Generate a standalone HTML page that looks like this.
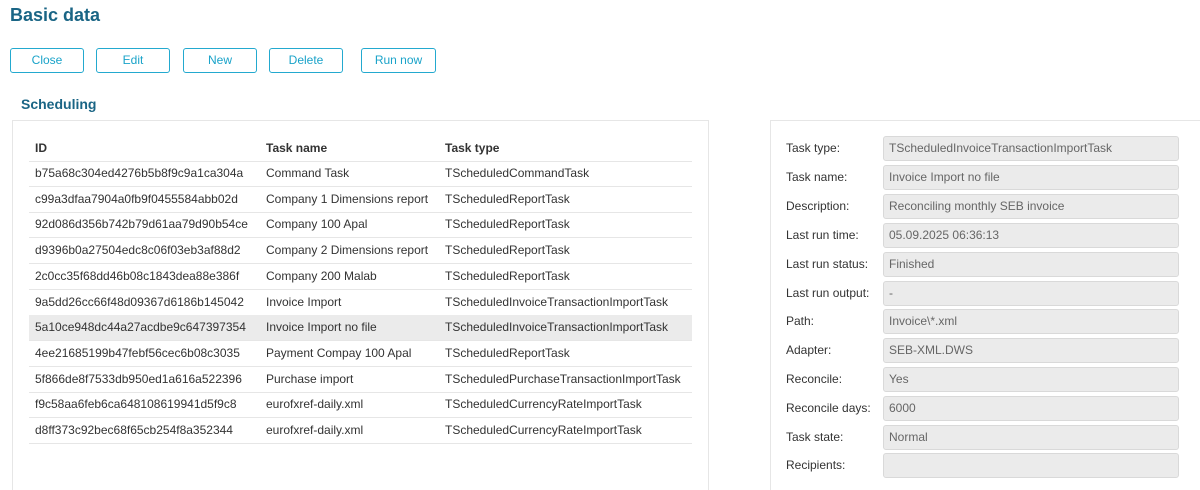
<!DOCTYPE html>
<html><head><meta charset="utf-8"><style>
*{box-sizing:border-box;margin:0;padding:0}
body{width:1200px;height:483px;overflow:hidden;background:#fff;font-family:"Liberation Sans",Arial,sans-serif;color:#333;position:relative}
.a{position:absolute}
h1{position:absolute;left:10px;top:5px;font-size:18px;font-weight:bold;color:#1a6585}
h2{position:absolute;left:21px;top:96px;font-size:14px;font-weight:bold;color:#1a6585}
.btn{position:absolute;top:48px;height:25px;border:1px solid #23a9cf;border-radius:3px;color:#1aa3c9;font-size:12px;text-align:center;line-height:23px;background:#fff}
.panel{position:absolute;top:120px;border:1px solid #e6e6e6;border-bottom:none}
.row{position:absolute;left:29px;width:663px;height:26px;border-bottom:1px solid #e6e6e6;font-size:12px;line-height:25px}
.row span{position:absolute}
.c1{left:6px}.c2{left:237px}.c3{left:416px}
.hd{font-weight:bold;font-size:12px}
.lbl{position:absolute;left:786px;font-size:12px;color:#333}
.inp{position:absolute;left:883px;width:296px;height:25px;background:#ebebeb;border:1px solid #d9d9d9;border-radius:3px;font-size:12px;color:#666;padding-left:5px;line-height:23px}
</style></head><body>
<h1>Basic data</h1>
<div class="btn" style="left:10px;width:74px">Close</div>
<div class="btn" style="left:96px;width:74px">Edit</div>
<div class="btn" style="left:183px;width:74px">New</div>
<div class="btn" style="left:269px;width:74px">Delete</div>
<div class="btn" style="left:361px;width:75px">Run now</div>
<h2>Scheduling</h2>
<div class="panel" style="left:12px;width:697px;height:370px"></div>
<div class="panel" style="left:770px;width:440px;height:370px"></div>

<div class="row hd" style="top:136px"><span class="c1">ID</span><span class="c2">Task name</span><span class="c3">Task type</span></div>
<div class="row" style="top:161px"><span class="c1">b75a68c304ed4276b5b8f9c9a1ca304a</span><span class="c2">Command Task</span><span class="c3">TScheduledCommandTask</span></div>
<div class="row" style="top:186.7px"><span class="c1">c99a3dfaa7904a0fb9f0455584abb02d</span><span class="c2">Company 1 Dimensions report</span><span class="c3">TScheduledReportTask</span></div>
<div class="row" style="top:212.4px"><span class="c1">92d086d356b742b79d61aa79d90b54ce</span><span class="c2">Company 100 Apal</span><span class="c3">TScheduledReportTask</span></div>
<div class="row" style="top:238.1px"><span class="c1">d9396b0a27504edc8c06f03eb3af88d2</span><span class="c2">Company 2 Dimensions report</span><span class="c3">TScheduledReportTask</span></div>
<div class="row" style="top:263.8px"><span class="c1">2c0cc35f68dd46b08c1843dea88e386f</span><span class="c2">Company 200 Malab</span><span class="c3">TScheduledReportTask</span></div>
<div class="row" style="top:289.5px"><span class="c1">9a5dd26cc66f48d09367d6186b145042</span><span class="c2">Invoice Import</span><span class="c3">TScheduledInvoiceTransactionImportTask</span></div>
<div class="row" style="top:315.2px;background:#ebebeb"><span class="c1">5a10ce948dc44a27acdbe9c647397354</span><span class="c2">Invoice Import no file</span><span class="c3">TScheduledInvoiceTransactionImportTask</span></div>
<div class="row" style="top:340.9px"><span class="c1">4ee21685199b47febf56cec6b08c3035</span><span class="c2">Payment Compay 100 Apal</span><span class="c3">TScheduledReportTask</span></div>
<div class="row" style="top:366.6px"><span class="c1">5f866de8f7533db950ed1a616a522396</span><span class="c2">Purchase import</span><span class="c3">TScheduledPurchaseTransactionImportTask</span></div>
<div class="row" style="top:392.3px"><span class="c1">f9c58aa6feb6ca648108619941d5f9c8</span><span class="c2">eurofxref-daily.xml</span><span class="c3">TScheduledCurrencyRateImportTask</span></div>
<div class="row" style="top:418px"><span class="c1">d8ff373c92bec68f65cb254f8a352344</span><span class="c2">eurofxref-daily.xml</span><span class="c3">TScheduledCurrencyRateImportTask</span></div>

<div class="lbl" style="top:141px">Task type:</div><div class="inp" style="top:136px">TScheduledInvoiceTransactionImportTask</div>
<div class="lbl" style="top:170px">Task name:</div><div class="inp" style="top:165px">Invoice Import no file</div>
<div class="lbl" style="top:199px">Description:</div><div class="inp" style="top:194px">Reconciling monthly SEB invoice</div>
<div class="lbl" style="top:228px">Last run time:</div><div class="inp" style="top:223px">05.09.2025 06:36:13</div>
<div class="lbl" style="top:257px">Last run status:</div><div class="inp" style="top:252px">Finished</div>
<div class="lbl" style="top:286px">Last run output:</div><div class="inp" style="top:281px">-</div>
<div class="lbl" style="top:314px">Path:</div><div class="inp" style="top:309px">Invoice\*.xml</div>
<div class="lbl" style="top:343px">Adapter:</div><div class="inp" style="top:338px">SEB-XML.DWS</div>
<div class="lbl" style="top:372px">Reconcile:</div><div class="inp" style="top:367px">Yes</div>
<div class="lbl" style="top:401px">Reconcile days:</div><div class="inp" style="top:396px">6000</div>
<div class="lbl" style="top:430px">Task state:</div><div class="inp" style="top:425px">Normal</div>
<div class="lbl" style="top:458px">Recipients:</div><div class="inp" style="top:453px"></div>
</body></html>
